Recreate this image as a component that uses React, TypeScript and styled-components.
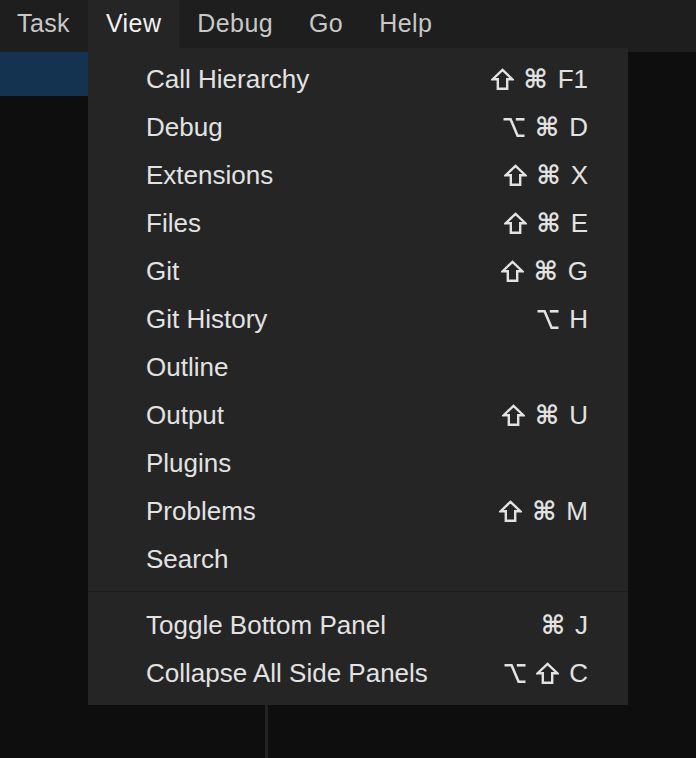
import { FC } from 'react'
import styled, { createGlobalStyle } from 'styled-components'

const GlobalStyle = createGlobalStyle`
    html, body {
        margin: 0;
        padding: 0;
        background: #0e0e0e;
    }
    body {
        font-family: "Liberation Sans", Arial, "DejaVu Sans", sans-serif;
        overflow: hidden;
    }
`

type KeyToken = 'shift' | 'cmd' | 'alt' | string;

interface IMenuEntry {
    label: string,
    keys?: KeyToken[],
}

const TOP_MENUS = ['Task', 'View', 'Debug', 'Go', 'Help'];

const VIEW_GROUPS: IMenuEntry[][] = [
    [
        { label: 'Call Hierarchy', keys: ['shift', 'cmd', 'F1'] },
        { label: 'Debug', keys: ['alt', 'cmd', 'D'] },
        { label: 'Extensions', keys: ['shift', 'cmd', 'X'] },
        { label: 'Files', keys: ['shift', 'cmd', 'E'] },
        { label: 'Git', keys: ['shift', 'cmd', 'G'] },
        { label: 'Git History', keys: ['alt', 'H'] },
        { label: 'Outline' },
        { label: 'Output', keys: ['shift', 'cmd', 'U'] },
        { label: 'Plugins' },
        { label: 'Problems', keys: ['shift', 'cmd', 'M'] },
        { label: 'Search' },
    ],
    [
        { label: 'Toggle Bottom Panel', keys: ['cmd', 'J'] },
        { label: 'Collapse All Side Panels', keys: ['alt', 'shift', 'C'] },
    ],
];

const ShiftIcon: FC = () => (
    <svg width="23" height="22" viewBox="0 0 23 22" fill="none">
        <path
            d="M11.5 1.8 L21.3 11.2 H16.2 V20.7 H6.8 V11.2 H1.7 Z"
            stroke="currentColor"
            strokeWidth="2.4"
            strokeLinejoin="miter"
        />
    </svg>
)

const OptionIcon: FC = () => (
    <svg width="22" height="21" viewBox="0 0 22 21" fill="none">
        <path d="M0.5 2.3 H7.6 L14.6 18.7 H21.5" stroke="currentColor" strokeWidth="2.6" />
        <path d="M12.8 2.3 H21.5" stroke="currentColor" strokeWidth="2.6" />
    </svg>
)

const KeyCap: FC<{ token: KeyToken }> = ({ token }) => {
    if (token === 'shift') return <IconKey><ShiftIcon /></IconKey>;
    if (token === 'alt') return <IconKey><OptionIcon /></IconKey>;
    if (token === 'cmd') return <SymbolKey>⌘</SymbolKey>;
    return <LetterKey>{token}</LetterKey>;
}

const App: FC = () => {
    return (
        <>
            <GlobalStyle />
            <Shell>
                <MenuBar>
                    {TOP_MENUS.map(name => (
                        <TopItem key={name} $active={name === 'View'}>
                            {name}
                            {name === 'View' && (
                                <Dropdown>
                                    {VIEW_GROUPS.map((group, gi) => (
                                        <Group key={gi}>
                                            {group.map(entry => (
                                                <Entry key={entry.label}>
                                                    <EntryLabel>{entry.label}</EntryLabel>
                                                    {entry.keys && (
                                                        <Shortcut>
                                                            {entry.keys.map((k, ki) => <KeyCap key={ki} token={k} />)}
                                                        </Shortcut>
                                                    )}
                                                </Entry>
                                            ))}
                                        </Group>
                                    ))}
                                </Dropdown>
                            )}
                        </TopItem>
                    ))}
                </MenuBar>
                <Workbench>
                    <SideBar>
                        <SelectedRow />
                    </SideBar>
                    <Splitter />
                    <Editor />
                </Workbench>
            </Shell>
        </>
    )
}

const Shell = styled.div`
    width: 696px;
    height: 758px;
    display: flex;
    flex-direction: column;
    background: #0e0e0e;
`

const MenuBar = styled.div`
    height: 52px;
    flex-shrink: 0;
    display: flex;
    align-items: flex-start;
    background: #1e1e1e;
    position: relative;
    z-index: 2;
`

const TopItem = styled.div<{ $active?: boolean }>`
    position: relative;
    display: flex;
    align-items: center;
    padding: 0 18px 2px;
    height: 46px;
    font-size: 25px;
    letter-spacing: 0.4px;
    color: ${p => p.$active ? '#f2f2f2' : '#c8c8c8'};
    background: ${p => p.$active ? '#252526' : 'transparent'};

    &:first-child {
        padding-left: 17px;
        width: 53px;
    }
`

const Dropdown = styled.div`
    position: absolute;
    top: 48px;
    left: 0;
    width: 540px;
    background: #252526;
    padding: 7px 0 8px;
    box-sizing: border-box;
    letter-spacing: 0;
`

const Group = styled.div`
    & + & {
        border-top: 1px solid #1d1d1d;
        margin-top: 8px;
        padding-top: 9px;
    }
`

const Entry = styled.div`
    height: 48px;
    display: flex;
    align-items: center;
    justify-content: space-between;
    padding: 0 40px 0 58px;
    color: #e2e2e2;
    font-size: 26px;
`

const EntryLabel = styled.span`
    white-space: nowrap;
`

const Shortcut = styled.span`
    display: flex;
    align-items: center;
    gap: 10px;
    white-space: nowrap;
`

const IconKey = styled.span`
    display: flex;
    align-items: center;
    color: #e2e2e2;
`

const SymbolKey = styled.span`
    font-family: "DejaVu Sans", sans-serif;
    font-size: 26px;
    font-weight: bold;
    line-height: 1;
`

const LetterKey = styled.span`
    font-size: 26px;
    line-height: 1;
`

const Workbench = styled.div`
    flex: 1;
    display: flex;
`

const SideBar = styled.div`
    width: 265px;
    flex-shrink: 0;
    background: #0e0e0e;
`

const SelectedRow = styled.div`
    height: 44px;
    width: 100%;
    background: #133350;
`

const Splitter = styled.div`
    width: 3px;
    background: #232323;
`

const Editor = styled.div`
    flex: 1;
    background: #0e0e0e;
`

export default App
